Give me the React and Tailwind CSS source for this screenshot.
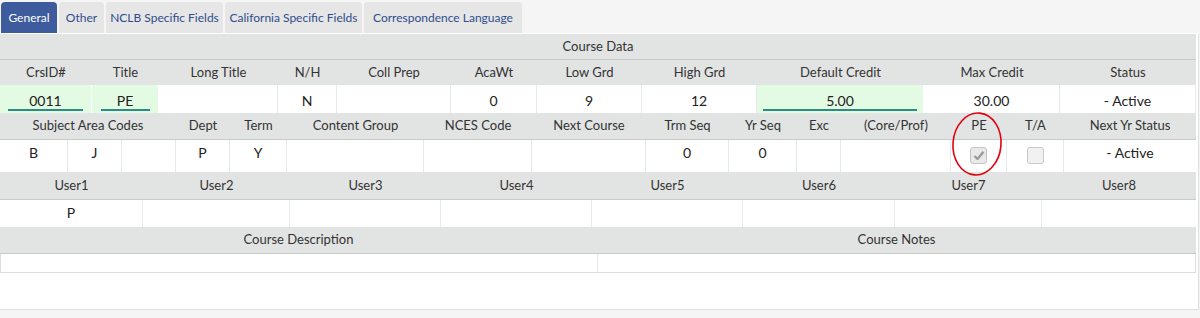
import React from "react";

const tabs = [
  { name: "General", w: "w-[56px]" },
  { name: "Other", w: "w-[45px]" },
  { name: "NCLB Specific Fields", w: "w-[117px]" },
  { name: "California Specific Fields", w: "w-[137px]" },
  { name: "Correspondence Language", w: "w-[158px]" },
];

// column templates measured from the screen
const row1Cols = "92px 67px 119px 59px 114px 86px 105px 115px 167px 136px 136px";
const row2Cols =
  "68px 54px 54px 54px 57px 137px 108px 114px 83px 68px 44px 110px 56px 57px 132px";
const row3Cols = "143px 147px 151px 151px 151px 152px 147px 154px";

const row1 = [
  { label: "CrsID#", value: "0011", green: true, line: "mx-[8px]" },
  { label: "Title", value: "PE", green: true, line: "ml-[9px] mr-[8px]" },
  { label: "Long Title", value: "" },
  { label: "N/H", value: "N" },
  { label: "Coll Prep", value: "" },
  { label: "AcaWt", value: "0" },
  { label: "Low Grd", value: "9" },
  { label: "High Grd", value: "12" },
  { label: "Default Credit", value: "5.00", green: true, line: "mx-[6px]" },
  { label: "Max Credit", value: "30.00" },
  { label: "Status", value: "- Active" },
];

const row2Values = ["B", "J", "", "P", "Y", "", "", "", "0", "0", "", "", "pe", "ta", "- Active"];

function Checkbox({ checked }) {
  return (
    <div
      className={
        "w-[17px] h-[17px] rounded-[3px] border flex items-center justify-center " +
        (checked ? "bg-[#e9e9e9] border-[#c4c4c4]" : "bg-[#f1f1f1] border-[#c9c9c9]")
      }
    >
      {checked && (
        <svg width="12" height="11" viewBox="0 0 12 11">
          <path d="M1.5 6 L4.5 9 L10.5 1.8" fill="none" stroke="#9c9c9c" strokeWidth="2.4" strokeLinejoin="round" />
        </svg>
      )}
    </div>
  );
}

export default function App() {
  return (
    <div className="relative min-h-[318px] bg-[#f5f5f5] font-['Lato',sans-serif] text-[#222]">
      {/* Tabs */}
      <div className="flex pl-px pt-[2px] h-[33px]">
        {tabs.map((t, i) => (
          <div
            key={t.name}
            className={
              t.w +
              " mr-[2px] flex items-center justify-center rounded-t-[4px] text-[12px] whitespace-nowrap " +
              (i === 0 ? "bg-[#3d5b9d] text-white" : "bg-[#e6e6e6] text-[#2f4d8c]")
            }
          >
            {t.name}
          </div>
        ))}
      </div>

      {/* Panel */}
      <div className="w-[1199px] h-[277px] bg-white border-t border-t-white border-r border-b border-[#e0e0e0]">
        <div className="w-[1196px] bg-[#e2e4e3]">
          {/* Course Data */}
          <div className="h-[26px] border-b border-[#c8cbca] flex items-center justify-center text-[13px] text-[#333]">
            Course Data
          </div>

          {/* Header row 1 */}
          <div className="grid h-[25px] text-[13px] text-[#333]" style={{ gridTemplateColumns: row1Cols }}>
            {row1.map((c) => (
              <div key={c.label} className="flex items-center justify-center">
                {c.label}
              </div>
            ))}
          </div>

          {/* Data row 1 */}
          <div className="grid h-[28px] text-[14px]" style={{ gridTemplateColumns: row1Cols }}>
            {row1.map((c) => (
              <div
                key={c.label}
                className={
                  "relative flex justify-center pt-[5px] border-r " +
                  (c.green ? "bg-[#e3fbe3] border-white" : "bg-white border-[#e5ebed]")
                }
              >
                {c.value}
                {c.green && (
                  <div className={"absolute left-0 right-0 bottom-[2px] h-[2px] bg-[#2a8c83] " + c.line} />
                )}
              </div>
            ))}
          </div>

          {/* Header row 2 */}
          <div
            className="grid h-[27px] border-b border-[#c8cbca] text-[13px] text-[#333]"
            style={{ gridTemplateColumns: row2Cols }}
          >
            <div className="col-span-3 flex items-center justify-center">Subject Area Codes</div>
            {["Dept", "Term", "Content Group", "NCES Code", "Next Course", "Trm Seq", "Yr Seq", "Exc", "(Core/Prof)", "PE", "T/A", "Next Yr Status"].map(
              (h) => (
                <div key={h} className="flex items-center justify-center">
                  {h}
                </div>
              )
            )}
          </div>

          {/* Data row 2 */}
          <div className="grid h-[32px] text-[14px]" style={{ gridTemplateColumns: row2Cols }}>
            {row2Values.map((v, i) => (
              <div key={i} className="flex justify-center pt-[2px] bg-white border-r border-[#e5ebed] last:border-r-0">
                {v === "pe" ? (
                  <div className="pt-[5px]">
                    <Checkbox checked />
                  </div>
                ) : v === "ta" ? (
                  <div className="pt-[5px]">
                    <Checkbox />
                  </div>
                ) : (
                  v
                )}
              </div>
            ))}
          </div>

          {/* Header row 3 */}
          <div
            className="grid h-[28px] border-b border-[#c8cbca] text-[13px] text-[#333]"
            style={{ gridTemplateColumns: row3Cols }}
          >
            {[1, 2, 3, 4, 5, 6, 7, 8].map((n) => (
              <div key={n} className="flex items-center justify-center">
                User{n}
              </div>
            ))}
          </div>

          {/* Data row 3 */}
          <div className="grid h-[27px] text-[14px]" style={{ gridTemplateColumns: row3Cols }}>
            {["P", "", "", "", "", "", "", ""].map((v, i) => (
              <div key={i} className="flex justify-center pt-[2px] bg-white border-r border-[#e5ebed] last:border-r-0">
                {v}
              </div>
            ))}
          </div>

          {/* Header row 4 */}
          <div className="grid grid-cols-[597px_599px] h-[27px] border-b border-[#c8cbca] text-[13px] text-[#333]">
            <div className="flex items-center justify-center">Course Description</div>
            <div className="flex items-center justify-center">Course Notes</div>
          </div>

          {/* Data row 4 */}
          <div className="grid grid-cols-[597px_599px] h-[19px] bg-white border-l border-b border-r border-[#dcdcdc]">
            <div className="border-r border-[#e5ebed]" />
            <div />
          </div>
        </div>
      </div>

      {/* red annotation around PE */}
      <svg className="absolute left-[946px] top-[108px]" width="62" height="72" viewBox="0 0 62 72">
        <ellipse
          cx="31"
          cy="36"
          rx="24"
          ry="31"
          fill="none"
          stroke="#e3000f"
          strokeWidth="1.6"
          transform="rotate(5 31 36)"
        />
      </svg>
    </div>
  );
}
